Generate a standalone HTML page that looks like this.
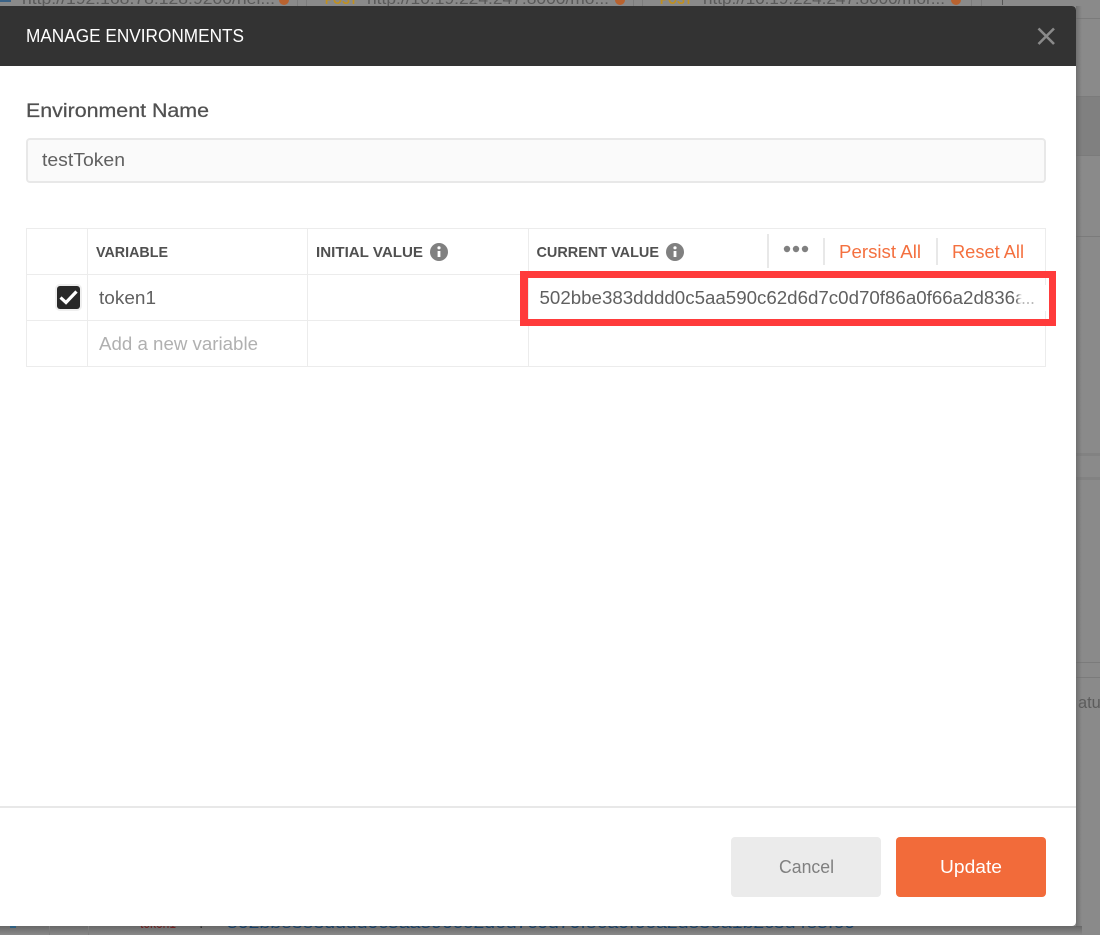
<!DOCTYPE html>
<html lang="en">
<head>
<meta charset="utf-8">
<title>Manage Environments</title>
<style>
html,body{margin:0;padding:0;width:1100px;height:935px;overflow:hidden;background:#8a8a8a}
svg{display:block;position:absolute;left:0;top:0}
text{font-family:"Liberation Sans",Arial,sans-serif}
.b{font-weight:bold;font-size:15px;fill:#505050}
.o{font-size:18.5px;fill:#f4703f}
</style>
</head>
<body>
<svg width="1100" height="935" viewBox="0 0 1100 935" xmlns="http://www.w3.org/2000/svg">
<defs>
<linearGradient id="sr" x1="0" x2="1" y1="0" y2="0"><stop offset="0" stop-color="#5f5f5f" stop-opacity=".6"/><stop offset="1" stop-color="#5f5f5f" stop-opacity="0"/></linearGradient>
<linearGradient id="sb" x1="0" x2="0" y1="0" y2="1"><stop offset="0" stop-color="#5f5f5f" stop-opacity=".8"/><stop offset="1" stop-color="#5f5f5f" stop-opacity="0"/></linearGradient>
<linearGradient id="fade" x1="0" x2="1" y1="0" y2="0"><stop offset="0" stop-color="#fff" stop-opacity="0"/><stop offset="1" stop-color="#fff"/></linearGradient>
</defs>

<!-- dimmed background -->
<rect width="1100" height="935" fill="#8a8a8a"/>
<rect x="1076" y="97" width="24" height="58" fill="#808080"/>
<g fill="#7b7b7b">
<rect x="1076" y="18" width="24" height="1"/><rect x="1076" y="96" width="24" height="1"/>
<rect x="1076" y="155" width="24" height="1"/><rect x="1076" y="236" width="24" height="1"/>
<rect x="1076" y="662" width="24" height="1"/><rect x="1076" y="677" width="24" height="1"/>
</g>
<rect x="1076" y="453" width="24" height="3" fill="#828282"/>
<rect x="1076" y="477" width="24" height="3" fill="#828282"/>
<text x="1078" y="708" font-size="17" fill="#5c5c5c" textLength="31" lengthAdjust="spacingAndGlyphs">atus</text>

<!-- top tabs strip -->
<rect x="0" y="0" width="11" height="2" fill="#3a6286"/>
<g font-size="16" fill="#5a5a5a">
<text x="22" y="4" textLength="253" lengthAdjust="spacingAndGlyphs">http://192.168.78.128:9200/hel...</text>
<text x="367" y="4" textLength="242" lengthAdjust="spacingAndGlyphs">http://10.19.224.247:8000/mo...</text>
<text x="703" y="4" textLength="242" lengthAdjust="spacingAndGlyphs">http://10.19.224.247:8000/mor...</text>
</g>
<g font-size="15" font-weight="bold" fill="#c0901f">
<text x="325" y="4" textLength="32" lengthAdjust="spacingAndGlyphs">POST</text>
<text x="660" y="4" textLength="32" lengthAdjust="spacingAndGlyphs">POST</text>
</g>
<g fill="#b8622f"><circle cx="284" cy="0" r="5"/><circle cx="620" cy="0" r="5"/><circle cx="956" cy="0" r="5"/></g>
<g fill="#7c7c7c"><rect x="297" y="0" width="1" height="6"/><rect x="306" y="0" width="1" height="6"/><rect x="633" y="0" width="1" height="6"/><rect x="642" y="0" width="1" height="6"/><rect x="971" y="0" width="1" height="6"/><rect x="981" y="0" width="1" height="6"/></g>
<rect x="1002" y="0" width="1" height="5" fill="#555"/>

<!-- modal shadow -->
<rect x="1076" y="6" width="6" height="921" fill="url(#sr)"/>
<rect x="0" y="926" width="1082" height="9" fill="url(#sb)"/>

<!-- bottom background text -->
<g fill="#7c7c7c"><rect x="49" y="926" width="1" height="9"/><rect x="88" y="926" width="1" height="9"/></g>
<rect x="10" y="926" width="6" height="2" fill="#2f5f80"/>
<text x="140" y="928" font-size="16" fill="#6e2222" textLength="36" lengthAdjust="spacingAndGlyphs">token1</text>
<text x="199" y="928" font-size="16" fill="#333">:</text>
<text x="227" y="928" font-size="16" fill="#173f66" textLength="628" lengthAdjust="spacingAndGlyphs">502bbe383dddd0c5aa590c62d6d7c0d70f86a0f66a2d836a1b2c3d4e5f60</text>

<!-- modal -->
<path d="M0 6H1072a4 4 0 0 1 4 4V922a4 4 0 0 1-4 4H0Z" fill="#fff"/>
<path d="M0 6H1072a4 4 0 0 1 4 4V66H0Z" fill="#333"/>
<text x="26" y="42" font-size="18" fill="#fff" textLength="218" lengthAdjust="spacingAndGlyphs">MANAGE ENVIRONMENTS</text>
<path d="M1038.5 28.5L1054 44M1054 28.5L1038.5 44" stroke="#8a8a8a" stroke-width="2.6" fill="none"/>

<text x="26" y="117" font-size="19.5" fill="#505050" stroke="#505050" stroke-width=".25" textLength="183" lengthAdjust="spacingAndGlyphs">Environment Name</text>
<rect x="27" y="139" width="1018" height="43" rx="3" fill="#fafafa" stroke="#e8e8e8" stroke-width="2"/>
<text x="42" y="166" font-size="18.5" fill="#606060" textLength="83" lengthAdjust="spacingAndGlyphs">testToken</text>

<!-- table -->
<g fill="none" stroke="#ececec" stroke-width="1">
<rect x="26.5" y="228.5" width="1019" height="138"/>
<path d="M26 274.5H1046M26 320.5H1046M87.5 228V367M307.5 228V367M528.5 228V367"/>
</g>
<text class="b" x="96" y="257" textLength="72" lengthAdjust="spacingAndGlyphs">VARIABLE</text>
<text class="b" x="316" y="257" textLength="107" lengthAdjust="spacingAndGlyphs">INITIAL VALUE</text>
<text class="b" x="536.5" y="257" textLength="122.5" lengthAdjust="spacingAndGlyphs">CURRENT VALUE</text>
<circle cx="439" cy="252" r="9" fill="#808080"/>
<circle cx="675" cy="252" r="9" fill="#808080"/>
<g fill="#fff"><rect x="437.6" y="251" width="2.8" height="6"/><circle cx="439" cy="247.8" r="1.6"/><rect x="673.6" y="251" width="2.8" height="6"/><circle cx="675" cy="247.8" r="1.6"/></g>
<g fill="#e8e8e8"><rect x="767" y="234" width="2" height="34"/><rect x="823" y="238" width="2" height="27"/><rect x="936" y="238" width="2" height="27"/></g>
<g fill="#808080"><circle cx="787" cy="249" r="3.2"/><circle cx="796" cy="249" r="3.2"/><circle cx="805" cy="249" r="3.2"/></g>
<text class="o" x="839" y="258" textLength="82" lengthAdjust="spacingAndGlyphs">Persist All</text>
<text class="o" x="952" y="258" textLength="72" lengthAdjust="spacingAndGlyphs">Reset All</text>

<rect x="55" y="284" width="27" height="27" rx="5" fill="#efefef"/>
<rect x="57" y="286" width="23" height="23" rx="3" fill="#282828"/>
<path d="M60.5 297.5L66 302.5L76.5 291.5" fill="none" stroke="#fff" stroke-width="3.2"/>
<text x="99" y="304" font-size="18.5" fill="#606060" textLength="57" lengthAdjust="spacingAndGlyphs">token1</text>
<text x="99" y="350" font-size="18.5" fill="#b0b0b0" textLength="159" lengthAdjust="spacingAndGlyphs">Add a new variable</text>

<!-- highlighted value -->
<text x="539.5" y="304" font-size="18.5" fill="#606060" textLength="486" lengthAdjust="spacingAndGlyphs">502bbe383dddd0c5aa590c62d6d7c0d70f86a0f66a2d836a</text>
<rect x="1016" y="285" width="6" height="26" fill="url(#fade)"/>
<rect x="1022" y="285" width="26" height="26" fill="#fff"/>
<g fill="#b5b5b5"><circle cx="1023.5" cy="303" r="1"/><circle cx="1028" cy="303" r="1"/><circle cx="1032.5" cy="303" r="1"/></g>
<path d="M524 274.5H1052.5V322.5H524Z" fill="none" stroke="#ff3b3b" stroke-width="7"/>
<rect x="520" y="271" width="8" height="55" fill="#ff3b3b"/>
<rect x="1049" y="271" width="7" height="55" fill="#ff3b3b"/>

<!-- footer -->
<rect x="0" y="806" width="1076" height="2" fill="#e8e8e8"/>
<rect x="731" y="837" width="150" height="60" rx="4" fill="#ebebeb"/>
<text x="779" y="873" font-size="18.5" fill="#808080" textLength="55" lengthAdjust="spacingAndGlyphs">Cancel</text>
<rect x="896" y="837" width="150" height="60" rx="4" fill="#f26b3a"/>
<text x="940" y="873" font-size="18.5" fill="#fff" textLength="62" lengthAdjust="spacingAndGlyphs">Update</text>
</svg>
</body>
</html>
